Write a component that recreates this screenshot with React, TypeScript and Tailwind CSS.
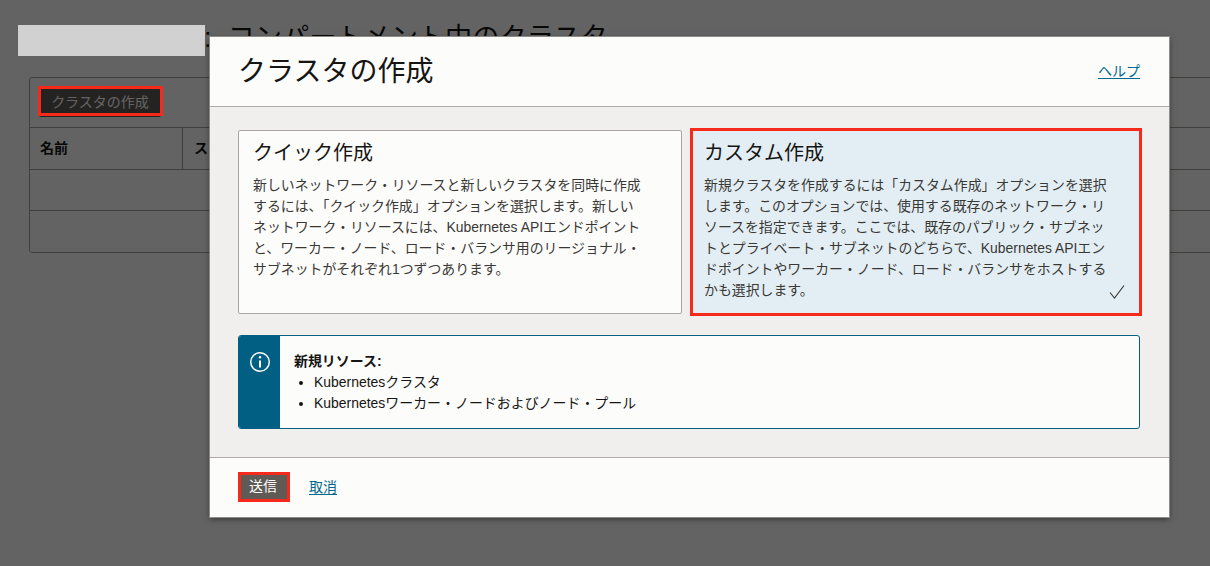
const font = "font-['Liberation_Sans','Noto_Sans_CJK_JP',sans-serif]";

function CheckMark() {
  return (
    <svg className="absolute right-[13px] bottom-[13px]" width="18" height="16" viewBox="0 0 18 16" fill="none" stroke="#3a3835" strokeWidth="1.1">
      <path d="M2 8.5 L6.5 14 L16 1.5" />
    </svg>
  );
}

function InfoIcon() {
  return (
    <svg width="22" height="22" viewBox="0 0 22 22" fill="none" stroke="#ffffff" strokeWidth="1.5">
      <circle cx="11" cy="11" r="9.3" />
      <path d="M11 9.5 V16.5" strokeWidth="2" />
      <circle cx="11" cy="6.3" r="1.2" fill="#ffffff" stroke="none" />
    </svg>
  );
}

// the page behind the dialog: heading and an empty cluster table
function BackgroundPage() {
  return (
    <div className="h-[566px] overflow-hidden bg-white pt-[20px] pl-[29px]">
      <h1 className="h-[36px] pl-[175px] text-[27.2px] leading-[36px] text-[#161513] whitespace-nowrap">
        <span className="mr-[16px]">:</span>コンパートメント中のクラスタ
      </h1>
      <div className="mt-[21px] w-[1300px] rounded-[3px] border border-[#a8a39e]">
        <div className="flex h-[50px] items-center border-b border-[#a8a39e] pl-[9px]">
          <button className="flex h-[28px] w-[122px] items-center justify-center rounded-[2px] bg-[#5f5a55] text-[14px] text-white">
            クラスタの作成
          </button>
        </div>
        <div className="flex h-[42px] items-center border-b border-[#a8a39e] text-[14px] font-bold text-[#161513]">
          <div className="flex h-full w-[153px] items-center border-r border-[#a8a39e] pl-[10px]">名前</div>
          <div className="pl-[11px]">ステータス</div>
        </div>
        <div className="h-[41px] border-b border-[#a8a39e]" />
        <div className="h-[41px]" />
      </div>
    </div>
  );
}

function OptionCard({ title, selected, children }: { title: string; selected?: boolean; children: React.ReactNode }) {
  return (
    <div
      className={
        selected
          ? "relative h-[188px] w-[452px] border-[3px] border-[#f7291b] bg-[#e2eef4] pt-[9px] pr-[12px] pl-[11px]"
          : "mt-[2px] h-[184px] w-[444px] rounded-[2px] border border-[#a9a5a0] bg-[#fcfcfb] pt-[9px] pr-[12px] pl-[14px]"
      }
    >
      <h3 className="text-[20px] leading-[26px] text-[#161513]">{title}</h3>
      <p className="mt-[9px] text-[13.9px] leading-[21px] text-[#3a3835] whitespace-nowrap">{children}</p>
      {selected && <CheckMark />}
    </div>
  );
}

function Dialog() {
  return (
    <div className="absolute top-[37px] left-[210px] flex h-[480px] w-[959px] flex-col bg-[#fcfcfb] shadow-[0_0_0_1px_#8f8c88,0_2px_6px_rgba(0,0,0,0.5)]">
      <div className="flex h-[70px] items-center justify-between border-b border-[#aeaaa5] pr-[29px] pl-[28px]">
        <h2 className="text-[28px] text-[#161513]">クラスタの作成</h2>
        <a className="text-[14px] text-[#00688c] underline underline-offset-2">ヘルプ</a>
      </div>
      <div className="flex h-[350px] flex-col bg-[#f1efed] pt-[21px] pl-[28px]">
        <div className="flex gap-[8px]">
          <OptionCard title="クイック作成">
            新しいネットワーク・リソースと新しいクラスタを同時に作成<br />
            するには、「クイック作成」オプションを選択します。新しい<br />
            ネットワーク・リソースには、Kubernetes APIエンドポイント<br />
            と、ワーカー・ノード、ロード・バランサ用のリージョナル・<br />
            サブネットがそれぞれ1つずつあります。
          </OptionCard>
          <OptionCard title="カスタム作成" selected>
            新規クラスタを作成するには「カスタム作成」オプションを選択<br />
            します。このオプションでは、使用する既存のネットワーク・リ<br />
            ソースを指定できます。ここでは、既存のパブリック・サブネッ<br />
            トとプライベート・サブネットのどちらで、Kubernetes APIエン<br />
            ドポイントやワーカー・ノード、ロード・バランサをホストする<br />
            かも選択します。
          </OptionCard>
        </div>
        <div className="mt-[19px] flex h-[94px] w-[902px] overflow-hidden rounded-[3px] border border-[#005f82] bg-[#fcfcfb]">
          <div className="flex w-[41px] justify-center bg-[#005f82] pt-[15px]">
            <InfoIcon />
          </div>
          <div className="pt-[15px] pl-[14px] text-[13.95px] leading-[21px] text-[#161513]">
            <div className="font-bold">新規リソース:</div>
            <ul className="list-disc pl-[20px] leading-[20.5px]">
              <li>Kubernetesクラスタ</li>
              <li>Kubernetesワーカー・ノードおよびノード・プール</li>
            </ul>
          </div>
        </div>
      </div>
      <div className="flex flex-1 items-center gap-[19px] border-t border-[#aeaaa5] pl-[28px]">
        <button className="mb-[2px] flex h-[30px] w-[52px] items-center justify-center border-[3px] border-[#f7291b] bg-[#5f5a55] pr-[2px] text-[14px] text-white">
          送信
        </button>
        <a className="text-[14px] text-[#00688c] underline underline-offset-2">取消</a>
      </div>
    </div>
  );
}

export default function App() {
  return (
    <div className={`relative h-[566px] w-[1210px] overflow-hidden ${font}`}>
      <BackgroundPage />
      {/* modal scrim */}
      <div className="absolute inset-0 bg-black/[0.61]" />
      {/* redaction block and annotation sit over the scrim */}
      <div className="absolute top-[25px] left-[18px] h-[31px] w-[187px] bg-[#d1d1d1]" />
      <div className="absolute top-[86px] left-[38px] h-[30px] w-[125px] border-[3px] border-[#f7291b]" />
      <Dialog />
    </div>
  );
}
